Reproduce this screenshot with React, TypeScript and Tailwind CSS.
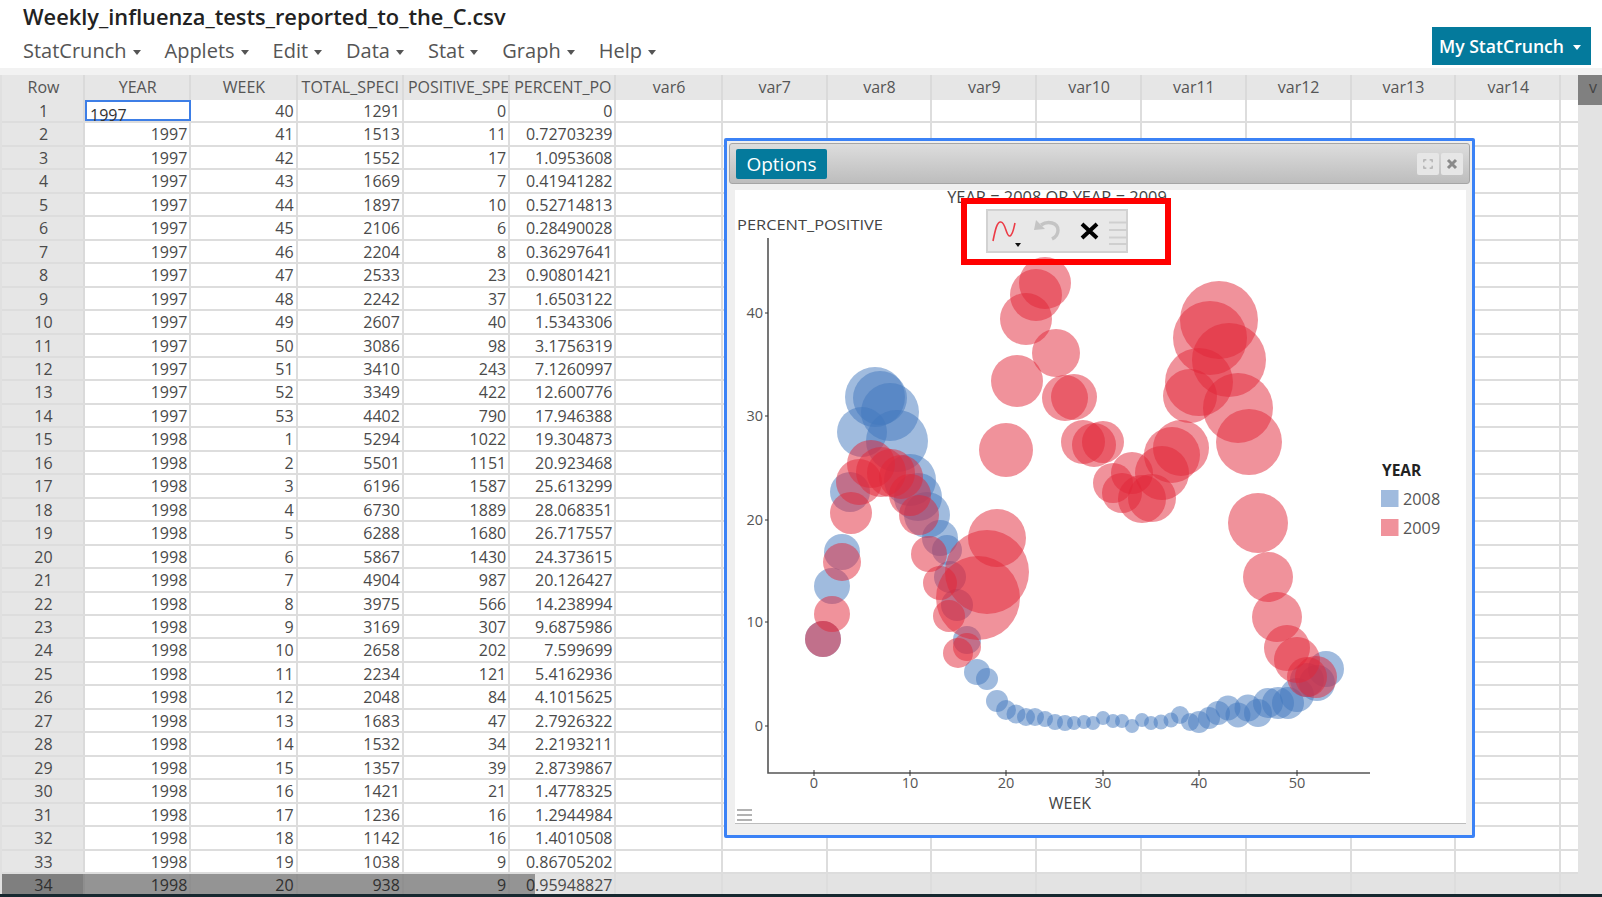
import React from "react";

const raw = `1997 40 1291 0 0
1997 41 1513 11 0.72703239
1997 42 1552 17 1.0953608
1997 43 1669 7 0.41941282
1997 44 1897 10 0.52714813
1997 45 2106 6 0.28490028
1997 46 2204 8 0.36297641
1997 47 2533 23 0.90801421
1997 48 2242 37 1.6503122
1997 49 2607 40 1.5343306
1997 50 3086 98 3.1756319
1997 51 3410 243 7.1260997
1997 52 3349 422 12.600776
1997 53 4402 790 17.946388
1998 1 5294 1022 19.304873
1998 2 5501 1151 20.923468
1998 3 6196 1587 25.613299
1998 4 6730 1889 28.068351
1998 5 6288 1680 26.717557
1998 6 5867 1430 24.373615
1998 7 4904 987 20.126427
1998 8 3975 566 14.238994
1998 9 3169 307 9.6875986
1998 10 2658 202 7.599699
1998 11 2234 121 5.4162936
1998 12 2048 84 4.1015625
1998 13 1683 47 2.7926322
1998 14 1532 34 2.2193211
1998 15 1357 39 2.8739867
1998 16 1421 21 1.4778325
1998 17 1236 16 1.2944984
1998 18 1142 16 1.4010508
1998 19 1038 9 0.86705202
1998 20 938 9 0.95948827`;
const rows = raw.split("\n").map((l) => l.split(" "));
const headers = ["YEAR", "WEEK", "TOTAL_SPECI", "POSITIVE_SPE", "PERCENT_PO", "var6", "var7", "var8", "var9", "var10", "var11", "var12", "var13", "var14"];
const menu = ["StatCrunch", "Applets", "Edit", "Data", "Stat", "Graph", "Help"];

const blue: number[][] = [
  [875, 397, 30], [880, 398, 27], [890, 412, 29], [862, 432, 25], [897, 441, 31], [910, 480, 26], [918, 497, 24], [927, 515, 23],
  [940, 538, 18], [850, 492, 20], [842, 552, 18], [832, 586, 18], [823, 639, 18], [947, 550, 15], [950, 577, 16], [957, 605, 16],
  [967, 640, 14], [977, 672, 13], [987, 679, 11], [997, 701, 11], [1006, 710, 10], [1016, 714, 9.5], [1026, 717, 9], [1035, 717, 9],
  [1045, 719, 8], [1055, 722, 8], [1065, 723, 8], [1074, 723, 7], [1084, 722, 7], [1093, 723, 7], [1103, 718, 7], [1113, 721, 7],
  [1122, 721, 7], [1132, 726, 7], [1142, 720, 7], [1151, 723, 7], [1161, 722, 7.5], [1171, 720, 7.5], [1180, 715, 9], [1190, 722, 9],
  [1199, 722, 11], [1209, 718, 11], [1218, 713, 12], [1228, 708, 12.5], [1238, 715, 12.5], [1248, 708, 13.5], [1258, 713, 14], [1268, 703, 15],
  [1278, 703, 16], [1288, 703, 16], [1297, 695, 17], [1307, 680, 17], [1317, 683, 18], [1326, 669, 18],
];
const red: number[][] = [
  [1045, 283, 26], [1036, 295, 26], [1026, 319, 26], [1056, 353, 24], [1017, 381, 26], [1074, 397, 23], [1065, 398, 23], [1006, 450, 27],
  [1083, 442, 22], [1094, 445, 22], [1103, 442, 21], [1113, 483, 20], [1132, 473, 21], [1122, 493, 20], [1142, 499, 24], [1152, 498, 24],
  [1162, 473, 27], [1172, 455, 28], [1181, 448, 28], [1190, 396, 27], [1199, 382, 34], [1210, 338, 37], [1219, 320, 39], [1229, 360, 37],
  [1238, 408, 35], [1249, 442, 33], [1258, 523, 30], [1268, 577, 25], [1277, 617, 25], [1287, 648, 23], [1297, 660, 23], [1307, 677, 20],
  [1316, 677, 21], [851, 513, 21], [859, 482, 23], [871, 464, 24], [881, 472, 25], [891, 473, 24], [901, 477, 22], [910, 495, 21], [919, 515, 20],
  [929, 554, 18], [842, 562, 19], [832, 614, 18], [823, 639, 18], [940, 583, 17], [949, 616, 16], [958, 653, 15], [967, 647, 14],
  [978, 598, 42], [987, 572, 42], [997, 538, 29],
];

function Cell({ v, sel, wide }: { v?: string; sel?: boolean; wide?: boolean }) {
  const w = wide ? "w-[106.3px]" : "w-[104.8px]";
  if (sel) {
    return (
      <div className={`${w} shrink-0 h-full border-2 border-[#3d7ee6] bg-white text-left pl-[3px] pt-[2px] leading-[23px] text-[#333]`}>{v}</div>
    );
  }
  return (
    <div className={`${w} shrink-0 h-full border-r-2 border-[#dddddd] text-right pr-[2px] leading-[22.5px] overflow-hidden whitespace-nowrap`}>{v}</div>
  );
}

function Caret({ color = "#555" }: { color?: string }) {
  return (
    <svg width="8" height="5" viewBox="0 0 8 5" className="ml-[6px] mt-[3px]">
      <path d="M0 0 H8 L4 5 Z" fill={color} />
    </svg>
  );
}

function Toolbar() {
  return (
    <div className="absolute left-[234px] top-[57px] w-[210px] h-[67px] border-[6px] border-[#ff0000] pl-[19px] pt-[5px]">
      <div className="w-[142px] h-[44px] bg-[#e8e8e8] border-2 border-[#d2d2d2] flex">
        <svg width="142" height="44" viewBox="0 0 142 44" className="-ml-[2px] -mt-[2px] shrink-0">
          <path d="M7 32 C9 22 11 12 15 13 C20 14 20 28 24 27 C27 26 28 18 29 14" fill="none" stroke="#ec3b46" strokeWidth="1.6" />
          <path d="M29 34 h6 l-3 4 z" fill="#111" />
          <path d="M66 30 C74 26 74 16 66 14 C62 13 58 14 55 16" fill="none" stroke="#c4c4c4" strokeWidth="3.4" />
          <path d="M48 21 L50 11 L59 20 Z" fill="#c4c4c4" />
          <path d="M96 15 L111 29 M111 15 L96 29" stroke="#000" strokeWidth="4" />
          <path d="M123 13.5 H141 M123 21 H141 M123 28.5 H141 M123 35 H141" stroke="#cfcfcf" strokeWidth="2" />
        </svg>
      </div>
    </div>
  );
}

function Chart() {
  const yt = [[0, 726], [10, 622], [20, 520], [30, 416], [40, 313]];
  const xt = [[0, 814], [10, 910], [20, 1006], [30, 1103], [40, 1199], [50, 1297]];
  return (
    <svg viewBox="735 190 732 634" width="732" height="634" className="block" fontFamily="'Open Sans', sans-serif">
      <text x="1057" y="203" textAnchor="middle" fontSize="16.4" fill="#444">YEAR = 2008 OR YEAR = 2009</text>
      <text x="737" y="230" fontSize="14.5" fill="#444" textLength="146" lengthAdjust="spacingAndGlyphs">PERCENT_POSITIVE</text>
      <path d="M768 238 V773 H1370" fill="none" stroke="#555" strokeWidth="1.6" />
      {yt.map(([v, y]) => (
        <g key={v}>
          <path d={`M765 ${y} H768`} stroke="#333" strokeWidth="1" />
          <text x="763" y={y + 5} textAnchor="end" fontSize="14.5" fill="#555">{v}</text>
        </g>
      ))}
      {xt.map(([v, x]) => (
        <g key={v}>
          <path d={`M${x} 770 V776`} stroke="#333" strokeWidth="1" />
          <text x={x} y="788" textAnchor="middle" fontSize="14.5" fill="#555">{v}</text>
        </g>
      ))}
      <text x="1070" y="809" textAnchor="middle" fontSize="16" fill="#444">WEEK</text>
      {blue.map(([x, y, r], i) => (
        <circle key={i} cx={x} cy={y} r={r} fill="#4177bd" fillOpacity="0.5" />
      ))}
      {red.map(([x, y, r], i) => (
        <circle key={i} cx={x} cy={y} r={r} fill="#e12537" fillOpacity="0.5" />
      ))}
      <text x="1382" y="476" fontSize="15.5" fontWeight="700" fill="#222">YEAR</text>
      <rect x="1381" y="490" width="17.5" height="17" fill="#a0bbde" />
      <text x="1403" y="505" fontSize="16.3" fill="#555">2008</text>
      <rect x="1381" y="519" width="17.5" height="17" fill="#f0929b" />
      <text x="1403" y="534" fontSize="16.3" fill="#555">2009</text>
      <path d="M737 810 H752 M737 815 H752 M737 820 H752" stroke="#666" strokeWidth="1.2" />
    </svg>
  );
}

function ChartWindow() {
  return (
    <div className="absolute left-[724px] top-[138px] w-[751px] h-[700px] border-[3px] border-[#3b82f6] rounded-[2px] bg-[#efefef] flex flex-col">
      <div className="mx-[2px] mt-[2px] h-[41px] shrink-0 rounded-[3px] border border-[#a5a5a5] bg-gradient-to-b from-[#dddddd] to-[#bdbdbd] flex items-center pl-[6px] pr-[6px]">
        <div className="w-[91px] h-[30px] rounded-[2px] bg-[#047a9c] text-white text-[19px] leading-[30px] text-center">Options</div>
        <div className="ml-auto flex gap-[2px]">
          <div className="w-[22px] h-[22px] rounded-[2px] bg-[#e6e6e6] flex items-center justify-center">
            <svg width="10" height="10" viewBox="0 0 12 12">
              <path d="M1 4 V1 H4 M8 1 H11 V4 M11 8 V11 H8 M4 11 H1 V8" fill="none" stroke="#aaa" strokeWidth="1.4" />
            </svg>
          </div>
          <div className="w-[22px] h-[22px] rounded-[2px] bg-[#e6e6e6] flex items-center justify-center">
            <svg width="12" height="12" viewBox="0 0 12 12">
              <path d="M2 2 L10 10 M10 2 L2 10" stroke="#8a8a8a" strokeWidth="3" />
            </svg>
          </div>
        </div>
      </div>
      <div className="ml-[8px] mr-[6px] mt-[6px] h-[634px] bg-white border-b border-[#bdbdbd] overflow-hidden">
        <Chart />
      </div>
      <Toolbar />
    </div>
  );
}

export default function App() {
  return (
    <div className="relative w-[1602px] h-[897px] overflow-hidden bg-white text-[#4a4a4a] font-['Open_Sans',sans-serif]">
      <div className="h-[68px] pl-[23px]">
        <div className="pt-[2px] text-[21.8px] leading-[30px] font-semibold text-[#222]">Weekly_influenza_tests_reported_to_the_C.csv</div>
        <div className="mt-[4px] flex items-center text-[20px] leading-[30px] text-[#555] relative">
          {menu.map((m) => (
            <div key={m} className="flex items-center mr-[24px]">
              {m}
              <Caret />
            </div>
          ))}
          <div className="absolute left-[1409px] -top-[9px] w-[159px] h-[38px] bg-[#047a9c] text-white flex items-center pl-[7px] font-semibold text-[17.6px]">
            My StatCrunch
            <span className="ml-[3px] flex"><Caret color="#fff" /></span>
          </div>
        </div>
      </div>
      <div className="h-[7px] bg-[#f2f2f2]" />
      <div className="flex h-[822px] text-[16px] border-l-2 border-[#e0e0e0]">
        <div className="w-[1576px] shrink-0">
          <div className="flex h-[25px] bg-[#e6e6e6] text-[16px] leading-[24px] text-[#555]">
            <div className="w-[83px] shrink-0 text-center pl-[2px] border-r-2 border-[#dadada]">Row</div>
            {headers.map((h, i) => (
              <div key={h} className={`${i < 6 ? "w-[106.3px]" : "w-[104.8px]"} shrink-0 border-r-2 border-[#dadada] overflow-hidden whitespace-nowrap ${i >= 2 && i <= 4 ? "text-left pl-[4px]" : "text-center pl-[1px]"}`}>{h}</div>
            ))}
          </div>
          {rows.map((r, idx) => {
            const last = idx === rows.length - 1;
            return (
              <div key={idx} className={`relative flex h-[23.46px] border-b-2 border-[#dddddd] ${last ? "bg-[#e3e3e3]" : ""}`}>
                <div className={`w-[83px] shrink-0 text-center pl-[2px] leading-[22.5px] border-r-2 border-[#dadada] ${last ? "bg-[#c4c4c4]" : "bg-[#e6e6e6]"}`}>{idx + 1}</div>
                {r.map((v, j) => (
                  <Cell key={j} v={v} sel={idx === 0 && j === 0} wide />
                ))}
                {Array.from({ length: 9 }).map((_, j) => (
                  <Cell key={j + 10} wide={j === 0} />
                ))}
                {last && <div className="absolute left-0 top-0 w-[533px] h-[23.4px] bg-black/35" />}
              </div>
            );
          })}
        </div>
        <div className="flex-1 bg-[#e3e3e3]">
          <div className="h-[30px] bg-[#808080] text-[16px] text-[#444] leading-[24px] overflow-hidden whitespace-nowrap pl-[11px]">v</div>
        </div>
      </div>
      <div className="absolute left-0 bottom-0 w-full h-[3px] bg-[#16282f]" />
      <ChartWindow />
    </div>
  );
}
